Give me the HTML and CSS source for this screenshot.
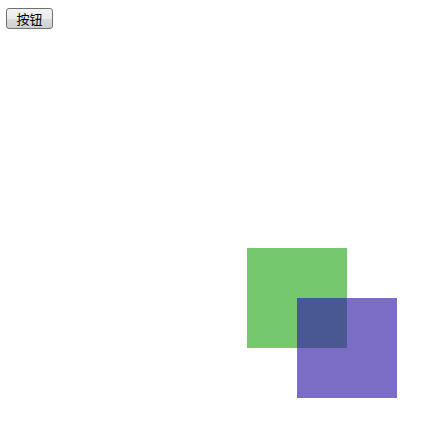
FILE: index.html
```html
<!DOCTYPE html>
<html>
<head>
<meta charset="utf-8">
<link rel="stylesheet" href="styles.css">
</head>
<body>
<button class="btn">按钮</button>
<div class="stage">
  <div class="box green"></div>
  <div class="box purple"></div>
</div>
</body>
</html>
```
FILE: styles.css
```css
html, body { margin: 0; padding: 0; background: #fff; }
body { position: relative; width: 445px; height: 448px; overflow: hidden; }
.btn {
  position: absolute; left: 6px; top: 8px;
  width: 47px; height: 21px;
  padding: 0; margin: 0;
  font-family: "Noto Sans CJK SC", sans-serif; font-size: 13px; line-height: 19px;
  color: #000;
  border: 1px solid #707070; border-radius: 3px;
  background: linear-gradient(#f2f2f2 0%, #ebebeb 50%, #dddddd 51%, #cfcfcf 100%);
}
.stage { position: absolute; left: 0; top: 0; width: 445px; height: 448px; }
.box { position: absolute; width: 100px; height: 100px; }
.green { left: 247px; top: 248px; background: #75c86d; }
.purple { left: 297px; top: 298px; background: rgba(50, 27, 167, 0.645); }
```
